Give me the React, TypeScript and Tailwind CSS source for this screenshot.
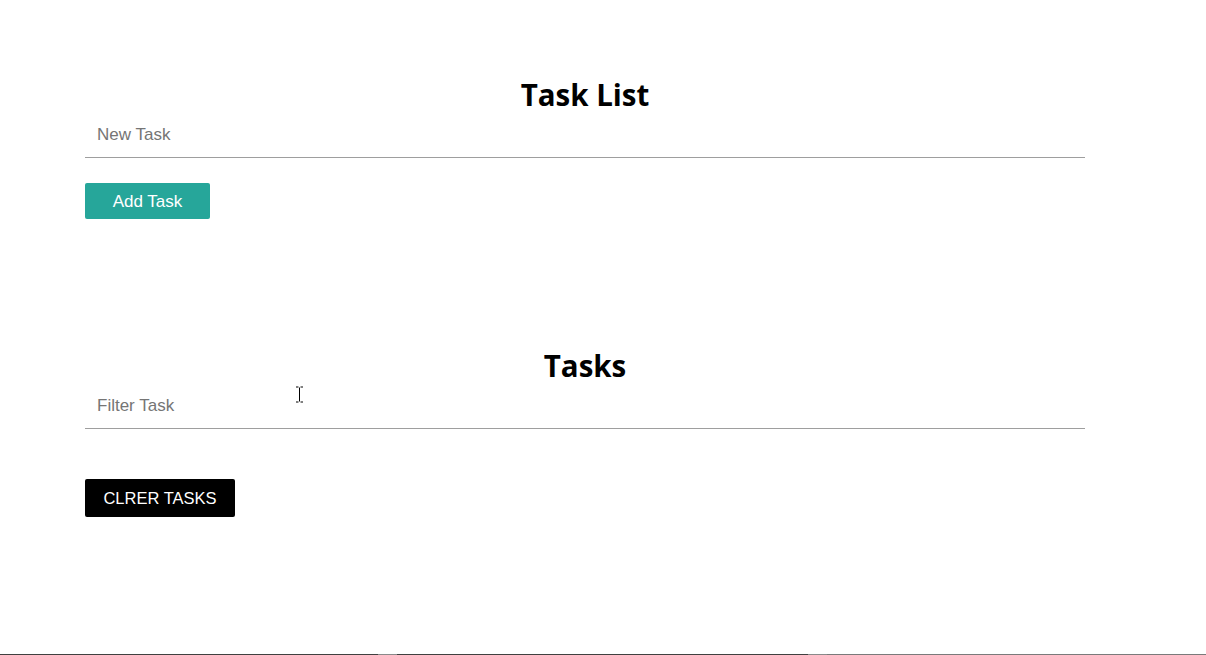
import React from "react";

export default function App() {
  return (
    <div className="relative flex min-h-[655px] w-full flex-col bg-white" style={{ fontFamily: '"Liberation Sans", Arial, sans-serif' }}>
      <div className="ml-[85px] flex w-[1000px] flex-1 flex-col pt-[80px]">
        <h1 className="text-center text-[29.5px] font-bold leading-[30px] text-black" style={{ fontFamily: '"Open Sans", sans-serif' }}>
          Task List
        </h1>
        <input
          type="text"
          placeholder="New Task"
          className="h-[48px] w-full border-b border-[#9e9e9e] bg-transparent px-[12px] pt-[2px] text-[17px] text-black outline-none placeholder:text-[#757575]"
        />
        <button className="mt-[25px] h-[36px] w-[125px] rounded-[2px] bg-[#26a69a] pt-[2px] text-[17px] text-white">
          Add Task
        </button>

        <h2 className="mt-[132px] text-center text-[29.5px] font-bold leading-[30px] text-black" style={{ fontFamily: '"Open Sans", sans-serif' }}>
          Tasks
        </h2>
        <input
          type="text"
          placeholder="Filter Task"
          className="h-[48px] w-full border-b border-[#9e9e9e] bg-transparent px-[12px] pt-[2px] text-[17px] text-black outline-none placeholder:text-[#757575]"
        />
        <button className="mt-[50px] h-[38px] w-[150px] rounded-[2px] bg-black text-[16.5px] uppercase text-white">
          Clrer Tasks
        </button>
      </div>

      <div className="flex h-px w-full">
        <div className="w-[378px] bg-[#404040]" />
        <div className="w-[19px] bg-[#8a8a8a]" />
        <div className="w-[411px] bg-[#404040]" />
        <div className="w-[19px] bg-[#8a8a8a]" />
        <div className="flex-1 bg-[#7a7a7a]" />
      </div>

      <svg className="pointer-events-none absolute left-[295px] top-[386px]" width="9" height="17" viewBox="0 0 9 17">
        <path d="M1 1h2.5M5.5 1H8M4.5 1.5v14M1 16h2.5M5.5 16H8" stroke="#000" strokeWidth="1" fill="none" />
      </svg>
    </div>
  );
}
